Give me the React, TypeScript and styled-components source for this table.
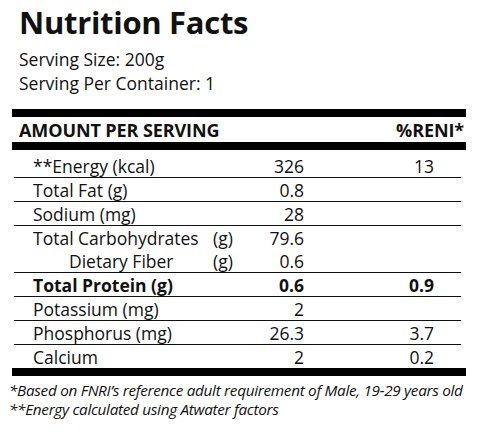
import styled, { createGlobalStyle } from "styled-components";

const GlobalStyle = createGlobalStyle`
	body {
		margin: 0;
		background: #ffffff;
		color: #111111;
		font-family: "Open Sans", "Liberation Sans", sans-serif;
	}
`;

interface Nutrient {
	label: string;
	unit?: string;
	value: string;
	reni?: string;
	bold?: boolean;
	indent?: boolean;
	line?: boolean;
}

const nutrients: Nutrient[] = [
	{ label: "**Energy (kcal)", value: "326", reni: "13", line: true },
	{ label: "Total Fat (g)", value: "0.8", line: true },
	{ label: "Sodium (mg)", value: "28", line: true },
	{ label: "Total Carbohydrates", unit: "(g)", value: "79.6" },
	{ label: "Dietary Fiber", unit: "(g)", value: "0.6", indent: true, line: true },
	{ label: "Total Protein (g)", value: "0.6", reni: "0.9", bold: true, line: true },
	{ label: "Potassium (mg)", value: "2", line: true },
	{ label: "Phosphorus (mg)", value: "26.3", reni: "3.7", line: true },
	{ label: "Calcium", value: "2", reni: "0.2" },
];

const App = () => {
	return (
		<Label>
			<GlobalStyle />
			<Header>
				<Title>Nutrition Facts</Title>
				<Serving>Serving Size: 200g</Serving>
				<Serving>Serving Per Container: 1</Serving>
			</Header>
			<Bar />
			<HeadRow>
				<span>AMOUNT PER SERVING</span>
				<span>%RENI*</span>
			</HeadRow>
			<Bar />
			<Rows>
				{nutrients.map((n, i) => (
					<Row key={n.label} $bold={n.bold} $line={n.line} $first={i === 0}>
						<Name $indent={n.indent}>{n.label}</Name>
						<Unit>{n.unit}</Unit>
						<Num>{n.value}</Num>
						<Num>{n.reni}</Num>
					</Row>
				))}
			</Rows>
			<Bar />
			<Notes>
				<p>*Based on FNRI’s reference adult requirement of Male, 19-29 years old</p>
				<p>**Energy calculated using Atwater factors</p>
			</Notes>
		</Label>
	);
};

const Label = styled.div`
	width: 454px;
	padding: 0 0 0 12px;
`;

const Header = styled.div`
	padding: 2px 0 14px 7px;
`;

const Title = styled.h1`
	margin: 0 0 5px;
	font-size: 31px;
	font-weight: 700;
	line-height: 40px;
	letter-spacing: -0.3px;
`;

const Serving = styled.div`
	font-size: 17.5px;
	line-height: 24px;
`;

const Bar = styled.div`
	height: 8px;
	background: #000000;
`;

const HeadRow = styled.div`
	display: flex;
	justify-content: space-between;
	align-items: center;
	height: 25px;
	padding: 1px 2px 0 7px;
	box-sizing: border-box;
	font-size: 18px;
	font-weight: 700;
	letter-spacing: -0.1px;
`;

const Rows = styled.div`
	width: 447px;
	margin-left: 2px;
`;

const Row = styled.div<{ $bold?: boolean; $line?: boolean; $first?: boolean }>`
	display: grid;
	grid-template-columns: 180px 40px 51px 130px;
	align-items: center;
	height: ${(p) => (p.$first ? 22 : 23)}px;
	padding: ${(p) => (p.$first ? "5px" : "0")} 0 0 19px;
	box-sizing: content-box;
	border-bottom: ${(p) => (p.$line ? "1.5px solid #111111" : "none")};
	font-size: 17.5px;
	line-height: 22px;
	font-weight: ${(p) => (p.$bold ? 700 : 400)};
	white-space: nowrap;
`;

const Name = styled.span<{ $indent?: boolean }>`
	padding-left: ${(p) => (p.$indent ? 36 : 0)}px;
`;

const Unit = styled.span``;

const Num = styled.span`
	text-align: right;
`;

const Notes = styled.div`
	margin-left: -3px;
	padding-top: 5px;
	font-size: 15.3px;
	font-style: italic;
	letter-spacing: -0.3px;
	white-space: nowrap;

	p {
		margin: 0;
		line-height: 19px;
	}
`;

export default App;
